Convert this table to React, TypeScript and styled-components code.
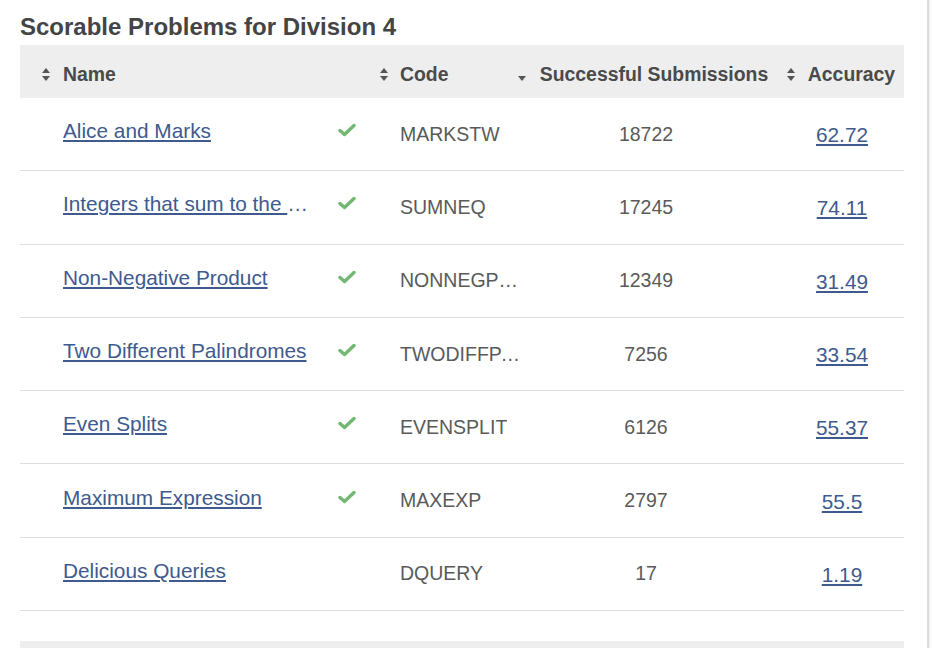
import styled, { createGlobalStyle } from "styled-components";

const GlobalStyle = createGlobalStyle`
  html, body {
    margin: 0;
    padding: 0;
    background: #fff;
  }
  body {
    font-family: "Liberation Sans", Arial, sans-serif;
    overflow: hidden;
  }
`;

const Panel = styled.div`
  width: 929px;
  height: 648px;
  box-sizing: border-box;
  padding: 13px 0 0 20px;
  border-right: 2px solid #dcdcdc;
  box-shadow: 1px 0 2px rgba(0, 0, 0, 0.08);
  overflow: hidden;
`;

const Title = styled.h3`
  margin: 0 0 4px;
  font-size: 24px;
  line-height: 28px;
  font-weight: bold;
  color: #444;
`;

const Table = styled.div`
  width: 884px;
`;

const cols = "310px 48px 132px 266px 128px";

const HeaderRow = styled.div`
  display: grid;
  grid-template-columns: ${cols};
  height: 53px;
  background: #eeeeee;
`;

const HeaderCell = styled.div<{ $align?: "start" | "center"; $pad?: number; $gap?: number }>`
  display: flex;
  align-items: center;
  justify-content: ${(p) => (p.$align === "center" ? "center" : "flex-start")};
  padding-left: ${(p) => p.$pad ?? 0}px;
  gap: ${(p) => p.$gap ?? 13}px;
  font-size: 19.4px;
  font-weight: bold;
  color: #4a4a4a;
  white-space: nowrap;
  padding-top: 5px;
`;

const Row = styled.div`
  display: grid;
  grid-template-columns: ${cols};
  height: 72.3px;
  border-bottom: 1px solid #dedede;
`;

const Cell = styled.div<{ $align?: "start" | "center"; $pad?: number; $lift?: number }>`
  display: flex;
  align-items: center;
  justify-content: ${(p) => (p.$align === "center" ? "center" : "flex-start")};
  padding-left: ${(p) => p.$pad ?? 0}px;
  padding-bottom: ${(p) => p.$lift ?? 0}px;
  min-width: 0;
  font-size: 19.5px;
  color: #5a5a5a;
`;

const ProblemLink = styled.a`
  display: block;
  max-width: 246px;
  font-size: 20.8px;
  color: #3e5a8e;
  text-decoration: underline;
  white-space: nowrap;
  overflow: hidden;
  text-overflow: ellipsis;
`;

const CodeText = styled.span`
  display: block;
  flex: none;
  max-width: 124px;
  white-space: nowrap;
  overflow: hidden;
  text-overflow: ellipsis;
`;

const AccuracyLink = styled.a`
  font-size: 20.8px;
  color: #3e5a8e;
  text-decoration: underline;
  margin-top: 2px;
`;

const NextHeader = styled.div`
  width: 884px;
  margin-top: 30px;
  height: 53px;
  background: #eeeeee;
`;

const SortBoth = () => (
  <svg width="8" height="13" viewBox="0 0 8 13">
    <path d="M4 0 L8 5 L0 5 Z" fill="#555" />
    <path d="M0 8 L8 8 L4 13 Z" fill="#555" />
  </svg>
);

const SortDown = () => (
  <svg width="8" height="13" viewBox="0 0 8 13">
    <path d="M0 8 L8 8 L4 13 Z" fill="#555" />
  </svg>
);

const CheckMark = () => (
  <svg width="18" height="14" viewBox="0 0 18 14">
    <path d="M2 7.5 L6.5 11.5 L16 2.5" fill="none" stroke="#72b872" strokeWidth="3.4" strokeLinecap="round" strokeLinejoin="round" />
  </svg>
);

type Problem = { name: string; solved: boolean; code: string; subs: number; acc: string };

const problems: Problem[] = [
  { name: "Alice and Marks", solved: true, code: "MARKSTW", subs: 18722, acc: "62.72" },
  { name: "Integers that sum to the Equal", solved: true, code: "SUMNEQ", subs: 17245, acc: "74.11" },
  { name: "Non-Negative Product", solved: true, code: "NONNEGPROD", subs: 12349, acc: "31.49" },
  { name: "Two Different Palindromes", solved: true, code: "TWODIFFPALIN", subs: 7256, acc: "33.54" },
  { name: "Even Splits", solved: true, code: "EVENSPLIT", subs: 6126, acc: "55.37" },
  { name: "Maximum Expression", solved: true, code: "MAXEXP", subs: 2797, acc: "55.5" },
  { name: "Delicious Queries", solved: false, code: "DQUERY", subs: 17, acc: "1.19" },
];

const App = () => {
  return (
    <>
      <GlobalStyle />
      <Panel>
        <Title>Scorable Problems for Division 4</Title>
        <Table>
          <HeaderRow>
            <HeaderCell $pad={22}>
              <SortBoth />
              Name
            </HeaderCell>
            <HeaderCell />
            <HeaderCell $pad={2} $gap={12}>
              <SortBoth />
              Code
            </HeaderCell>
            <HeaderCell $align="center" $gap={14}>
              <SortDown />
              Successful Submissions
            </HeaderCell>
            <HeaderCell $align="center" $gap={13} $pad={2}>
              <SortBoth />
              Accuracy
            </HeaderCell>
          </HeaderRow>
          {problems.map((p) => (
            <Row key={p.code}>
              <Cell $pad={43} $lift={6}>
                <ProblemLink href="#">{p.name}</ProblemLink>
              </Cell>
              <Cell $pad={8} $lift={8}>
                {p.solved && <CheckMark />}
              </Cell>
              <Cell $pad={22}>
                <CodeText>{p.code}</CodeText>
              </Cell>
              <Cell $align="center" $pad={6}>{p.subs}</Cell>
              <Cell $align="center" $pad={4}>
                <AccuracyLink href="#">{p.acc}</AccuracyLink>
              </Cell>
            </Row>
          ))}
        </Table>
        <NextHeader />
      </Panel>
    </>
  );
};

export default App;
